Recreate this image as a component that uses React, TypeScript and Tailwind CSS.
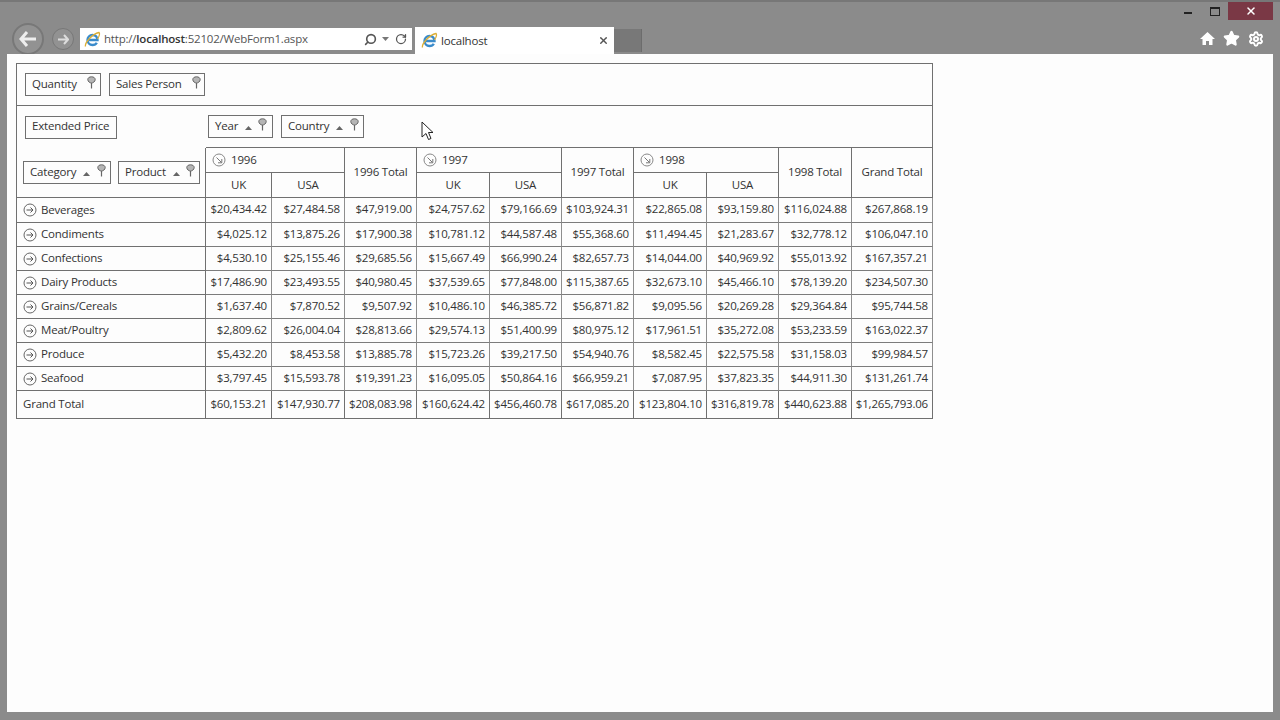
import { Settings, Star, RotateCw, Search, X } from "lucide-react";

const rows = [
  ["Beverages", "$20,434.42", "$27,484.58", "$47,919.00", "$24,757.62", "$79,166.69", "$103,924.31", "$22,865.08", "$93,159.80", "$116,024.88", "$267,868.19"],
  ["Condiments", "$4,025.12", "$13,875.26", "$17,900.38", "$10,781.12", "$44,587.48", "$55,368.60", "$11,494.45", "$21,283.67", "$32,778.12", "$106,047.10"],
  ["Confections", "$4,530.10", "$25,155.46", "$29,685.56", "$15,667.49", "$66,990.24", "$82,657.73", "$14,044.00", "$40,969.92", "$55,013.92", "$167,357.21"],
  ["Dairy Products", "$17,486.90", "$23,493.55", "$40,980.45", "$37,539.65", "$77,848.00", "$115,387.65", "$32,673.10", "$45,466.10", "$78,139.20", "$234,507.30"],
  ["Grains/Cereals", "$1,637.40", "$7,870.52", "$9,507.92", "$10,486.10", "$46,385.72", "$56,871.82", "$9,095.56", "$20,269.28", "$29,364.84", "$95,744.58"],
  ["Meat/Poultry", "$2,809.62", "$26,004.04", "$28,813.66", "$29,574.13", "$51,400.99", "$80,975.12", "$17,961.51", "$35,272.08", "$53,233.59", "$163,022.37"],
  ["Produce", "$5,432.20", "$8,453.58", "$13,885.78", "$15,723.26", "$39,217.50", "$54,940.76", "$8,582.45", "$22,575.58", "$31,158.03", "$99,984.57"],
  ["Seafood", "$3,797.45", "$15,593.78", "$19,391.23", "$16,095.05", "$50,864.16", "$66,959.21", "$7,087.95", "$37,823.35", "$44,911.30", "$131,261.74"],
];
const totals = ["$60,153.21", "$147,930.77", "$208,083.98", "$160,624.42", "$456,460.78", "$617,085.20", "$123,804.10", "$316,819.78", "$440,623.88", "$1,265,793.06"];
const colWidths = [189, 66, 73, 72, 73, 72, 72, 73, 72, 73, 81];

function Pin() {
  return (
    <svg width="9" height="13" viewBox="0 0 9 13" className="shrink-0">
      <path d="M.8 3.6C.8 1.8 2.4.8 4.5.8s3.7 1 3.7 2.8C8.2 5.6 6 7 4.5 7S.8 5.6.8 3.6z" fill="#b5b5b5" stroke="#666" strokeWidth="1" />
      <path d="M4.5 7v5.5" stroke="#666" strokeWidth="1.2" />
    </svg>
  );
}

function Sort() {
  return (
    <svg width="7" height="4" viewBox="0 0 7 4" className="shrink-0">
      <path d="M3.5 0L7 4H0z" fill="#666" />
    </svg>
  );
}

function Chip({ label, sort, pin, gap, className }: { label: string; sort?: boolean; pin?: boolean; gap?: string; className: string }) {
  return (
    <div className={`flex h-[23px] items-center border border-[#707070] bg-[#fdfdfd] pb-[2px] pl-[6px] ${className}`}>
      <span>{label}</span>
      {sort && <span className="ml-[7px] mt-[5px] flex"><Sort /></span>}
      {pin && <span className={`flex -translate-y-[1px] ${gap}`}><Pin /></span>}
    </div>
  );
}

function Expand() {
  return (
    <svg width="14" height="14" viewBox="0 0 14 14" className="shrink-0">
      <circle cx="7" cy="7" r="6" fill="none" stroke="#666" />
      <path d="M3.5 7h6.5M7.5 4.5L10 7l-2.5 2.5" fill="none" stroke="#555" />
    </svg>
  );
}

function Collapse() {
  return (
    <svg width="14" height="14" viewBox="0 0 14 14" className="shrink-0">
      <circle cx="7" cy="7" r="6" fill="none" stroke="#888" />
      <path d="M4.5 4.5l5 5M9.8 6v3.8H6" fill="none" stroke="#777" />
    </svg>
  );
}

function IeLogo() {
  return (
    <svg width="17" height="17" viewBox="0 0 17 17" className="shrink-0">
      <path d="M3.5 9h10c0-3-2-5-5-5s-5 2.300-5 5 2 5 5 5c2 0 3.500-.8 4.300-2.300" fill="none" stroke="#3a8bcb" strokeWidth="2.4" />
      <path d="M1.500 15.500C.5 12 8 3 15 1.500c1.500 2-.5 5-1.500 6.500" fill="none" stroke="#dcae35" strokeWidth="1.300" />
    </svg>
  );
}

function YearCell({ year }: { year: string }) {
  return (
    <th colSpan={2} className="border-b border-r border-[#707070] pl-[6px] text-left font-normal">
      <div className="flex items-center gap-[5px]">
        <Collapse />
        <span>{year}</span>
      </div>
    </th>
  );
}

function TotalHead({ label }: { label: string }) {
  return (
    <th rowSpan={2} className="border-b border-r border-[#707070] pb-[2px] text-center font-normal">
      {label}
    </th>
  );
}

function SubHead({ label }: { label: string }) {
  return <th className="border-b border-r border-[#707070] text-center font-normal">{label}</th>;
}

export default function App() {
  return (
    <div className="relative flex h-[720px] w-[1280px] flex-col overflow-hidden bg-[#8b8b8b] text-[11.5px] tracking-[-0.2px] text-[#333] [font-family:'Open_Sans',sans-serif]">
      <div className="flex h-[54px] shrink-0 flex-col border-t-2 border-[#777]">
        <div className="flex h-[18px] justify-end pr-[7px]">
          <div className="mt-[10px] h-[2px] w-[8px] bg-[#222]" />
          <div className="ml-[18px] mt-[5px] h-[9px] w-[10px] border border-t-2 border-[#222]" />
          <div className="ml-[8px] flex w-[45px] items-center justify-center bg-[#7a3845] text-white">
            <X size={12} strokeWidth={3} />
          </div>
        </div>
        <div className="flex h-[34px] pl-[12px]">
          <div className="mt-[3px] flex h-[32px] w-[32px] items-center justify-center rounded-full border-2 border-[#787878] bg-[#929292] text-[#eee]">
            <svg width="18" height="16" viewBox="0 0 18 16"><path d="M8 1L2 8l6 7M2 8h15" fill="none" stroke="currentColor" strokeWidth="3" /></svg>
          </div>
          <div className="ml-[8px] mt-[8px] flex h-[22px] w-[22px] items-center justify-center rounded-full border border-[#787878] bg-[#929292] text-[#ddd]">
            <svg width="12" height="11" viewBox="0 0 12 11"><path d="M7 1l4 4.500L7 10M11 5.500H1" fill="none" stroke="currentColor" strokeWidth="2" /></svg>
          </div>
          <div className="ml-[6px] mt-[8px] flex h-[22px] w-[332px] items-center bg-white pl-[4px] pr-[5px] text-[#555]">
            <IeLogo />
            <span className="ml-[3px] flex-1">http://<b className="font-semibold text-[#333]">localhost</b>:52102/WebForm1.aspx</span>
            <Search size={13} strokeWidth={3} className="-scale-x-100 text-[#555]" />
            <svg width="7" height="4" viewBox="0 0 7 4" className="ml-[5px]"><path d="M0 0h7L3.500 4z" fill="#777" /></svg>
            <RotateCw size={12} strokeWidth={2.5} className="ml-[6px] text-[#555]" />
          </div>
          <div className="ml-[3px] mt-[7px] flex h-[27px] w-[199px] items-center bg-white pl-[6px] pr-[5px] text-[#333]">
            <IeLogo />
            <span className="ml-[3px] flex-1">localhost</span>
            <X size={11} strokeWidth={3} className="text-[#555]" />
          </div>
          <div className="mt-[9px] h-[23px] w-[28px] border-r border-[#6c6c6c] bg-[#787878]" />
          <div className="flex-1" />
          <div className="mr-[16px] mt-[10px] flex items-center gap-[8px] self-start text-white">
            <svg width="15" height="15" viewBox="0 0 15 15"><path d="M7.500 1L0 8h2.500v6h3.500v-4h3v4h3.500V8H15z" fill="currentColor" /></svg>
            <Star size={17} fill="currentColor" />
            <Settings size={16} strokeWidth={3} />
          </div>
        </div>
      </div>

      <div className="mx-[7px] mb-[8px] flex-1 bg-[#fdfdfd] pl-[9px] pt-[9px]">
        <table className="table-fixed border-separate border-spacing-0 border-l border-t border-[#707070]">
          <colgroup>
            {colWidths.map((w, i) => (
              <col key={i} style={{ width: w }} />
            ))}
          </colgroup>
          <tbody>
            <tr className="h-[42px]">
              <td colSpan={11} className="border-b border-r border-[#707070] pl-[8px]">
                <div className="flex gap-[8px]">
                  <Chip label="Quantity" pin gap="ml-[10px]" className="w-[76px]" />
                  <Chip label="Sales Person" pin gap="ml-[10px]" className="w-[96px]" />
                </div>
              </td>
            </tr>
            <tr className="h-[42px]">
              <td className="pl-[8px]">
                <Chip label="Extended Price" className="w-[92px]" />
              </td>
              <td colSpan={10} className="border-b border-r border-[#707070] pl-[2px]">
                <div className="flex gap-[8px]">
                  <Chip label="Year" sort pin gap="ml-[6px]" className="w-[65px]" />
                  <Chip label="Country" sort pin gap="ml-[7px]" className="w-[83px]" />
                </div>
              </td>
            </tr>
            <tr className="h-[25px]">
              <td rowSpan={2} className="border-b border-r border-[#707070] pl-[6px]">
                <div className="flex gap-[7px]">
                  <Chip label="Category" sort pin gap="ml-[7px]" className="w-[88px]" />
                  <Chip label="Product" sort pin gap="ml-[6px]" className="w-[82px]" />
                </div>
              </td>
              <YearCell year="1996" />
              <TotalHead label="1996 Total" />
              <YearCell year="1997" />
              <TotalHead label="1997 Total" />
              <YearCell year="1998" />
              <TotalHead label="1998 Total" />
              <TotalHead label="Grand Total" />
            </tr>
            <tr className="h-[25px]">
              <SubHead label="UK" />
              <SubHead label="USA" />
              <SubHead label="UK" />
              <SubHead label="USA" />
              <SubHead label="UK" />
              <SubHead label="USA" />
            </tr>
            {rows.map((r, n) => (
              <tr key={r[0]} className={n === 0 ? "h-[25px]" : "h-[24px]"}>
                <td className="border-b border-r border-[#707070] pl-[6px]">
                  <div className="flex items-center gap-[4px]">
                    <Expand />
                    <span className={n === 0 ? "" : "-translate-y-[1px]"}>{r[0]}</span>
                  </div>
                </td>
                {r.slice(1).map((v, i) => (
                  <td key={i} className={`border-b border-r border-b-[#7c7c7c] border-r-[#8e8e8e] pr-[4px] text-right ${n === 0 ? "pb-[3px]" : "pb-[1px]"}`}>
                    {v}
                  </td>
                ))}
              </tr>
            ))}
            <tr className="h-[28px]">
              <td className="border-b border-r border-[#707070] pb-[2px] pl-[6px]">Grand Total</td>
              {totals.map((v, i) => (
                <td key={i} className="border-b border-r border-[#707070] pb-[2px] pr-[4px] text-right">
                  {v}
                </td>
              ))}
            </tr>
          </tbody>
        </table>
      </div>

      <svg width="14" height="20" viewBox="0 0 14 20" className="absolute left-[421px] top-[121px]">
        <path d="M1 1v15l4-3.500 2.500 6 2.500-1-2.500-6H12z" fill="#fff" stroke="#222" strokeWidth="1" />
      </svg>
    </div>
  );
}
